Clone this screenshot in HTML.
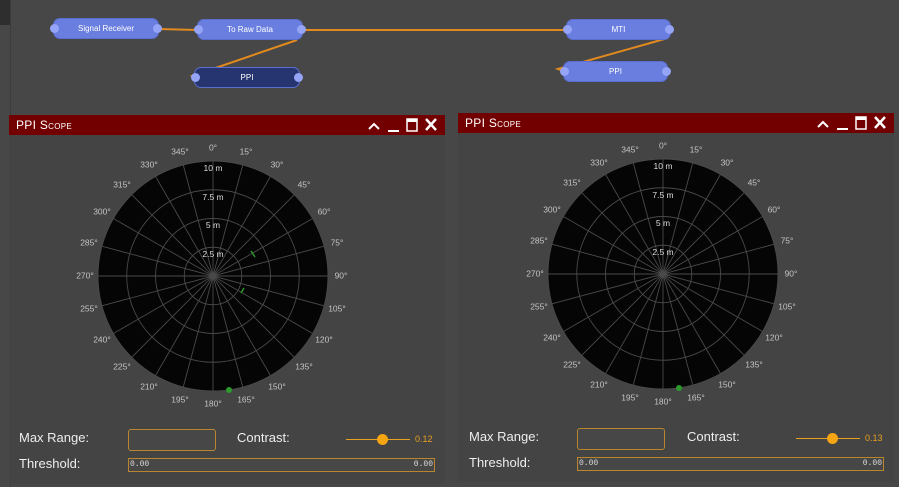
<!DOCTYPE html>
<html><head><style>
body{margin:0;width:899px;height:487px;overflow:hidden;background:#474747;font-family:"Liberation Sans",sans-serif;position:relative}
.a{position:absolute}
.node{position:absolute;height:19px;border-radius:6px;background:#6a7ee0;color:#fff;font-size:8px;text-align:center;line-height:19px;box-shadow:0 0 0 1px #5a6ed0}
.port{position:absolute;width:9px;height:9px;border-radius:50%;background:#95a4f7;top:5px}
.panel{position:absolute;width:436px;height:369px;background:#444}
.tb{height:20px;background:#730000;color:#fff;font-size:12px;line-height:20px;padding-left:7px;font-variant:small-caps;letter-spacing:.3px}
.lbl{position:absolute;color:#eee;font-size:13px}
.box{position:absolute;border:1px solid #b8862e;border-radius:3px;background:#474747}
.mono{position:absolute;font-family:"Liberation Mono",monospace;font-size:8px;color:#ddd;top:1px}
</style></head><body>
<div class="a" style="left:0;top:0;width:10px;height:25px;background:#2e2e2e"></div>
<div class="a" style="left:10px;top:0;width:1px;height:487px;background:#3c3c3c"></div>
<svg class="a" style="left:0;top:0" width="899" height="110">
<g stroke="#e08a1f" stroke-width="2" fill="none">
<line x1="158" y1="29" x2="198" y2="30"/>
<line x1="302" y1="30" x2="567" y2="30"/>
<path d="M297 40 L192 76 L197 79"/>
<path d="M668 38 L558 69 L564 71"/>
</g></svg>
<div class="node" style="left:54px;top:19px;width:104px">Signal Receiver<div class="port" style="left:-4px"></div><div class="port" style="right:-4px"></div></div>
<div class="node" style="left:198px;top:20px;width:104px">To Raw Data<div class="port" style="left:-4px"></div><div class="port" style="right:-4px"></div></div>
<div class="node" style="left:195px;top:68px;width:104px;background:#26346f;box-shadow:0 0 0 1px #5a6ed0">PPI<div class="port" style="left:-4px"></div><div class="port" style="right:-4px"></div></div>
<div class="node" style="left:567px;top:20px;width:103px">MTI<div class="port" style="left:-4px"></div><div class="port" style="right:-4px"></div></div>
<div class="node" style="left:564px;top:62px;width:103px">PPI<div class="port" style="left:-4px"></div><div class="port" style="right:-4px"></div></div>

<div class="panel" style="left:9px;top:115px">
<div class="tb">PPI Scope</div>
<svg class="a" style="left:355px;top:0" width="80" height="20" fill="none" stroke="#fff" stroke-width="2"><path d="M5 14 L10 9 L15 14"/><path d="M24 16 H35"/><rect x="43" y="4" width="10" height="12" stroke-width="1.5"/><path d="M43 5.5 H53" stroke-width="3"/><path d="M62 4 L72 15 M72 4 L62 15" stroke-width="2.5"/></svg>
</div>
<div class="panel" style="left:458px;top:113px">
<div class="tb">PPI Scope</div>
<svg class="a" style="left:355px;top:0" width="80" height="20" fill="none" stroke="#fff" stroke-width="2"><path d="M5 14 L10 9 L15 14"/><path d="M24 16 H35"/><rect x="43" y="4" width="10" height="12" stroke-width="1.5"/><path d="M43 5.5 H53" stroke-width="3"/><path d="M62 4 L72 15 M72 4 L62 15" stroke-width="2.5"/></svg>
</div>

<svg class="a" style="left:0;top:0" width="899" height="487" font-family="Liberation Sans" font-size="8.5">
<defs><g id="grid">
<circle r="115" fill="#050505"/>
<g stroke="#4a4a4a" stroke-width="0.9" fill="none">
<circle r="28.75"/><circle r="57.5"/><circle r="86.25"/><circle r="115"/>
<line y1="-115" y2="115"/><line y1="-115" y2="115" transform="rotate(15)"/><line y1="-115" y2="115" transform="rotate(30)"/><line y1="-115" y2="115" transform="rotate(45)"/><line y1="-115" y2="115" transform="rotate(60)"/><line y1="-115" y2="115" transform="rotate(75)"/><line y1="-115" y2="115" transform="rotate(90)"/><line y1="-115" y2="115" transform="rotate(105)"/><line y1="-115" y2="115" transform="rotate(120)"/><line y1="-115" y2="115" transform="rotate(135)"/><line y1="-115" y2="115" transform="rotate(150)"/><line y1="-115" y2="115" transform="rotate(165)"/>
</g>
<g fill="#ddd" text-anchor="middle">
<text y="-105">10 m</text><text y="-76">7.5 m</text><text y="-48">5 m</text><text y="-19">2.5 m</text>
</g>
<g fill="#c4c4c4" text-anchor="middle" dominant-baseline="middle">
<text x="0" y="-128">0°</text><text x="33" y="-124">15°</text><text x="64" y="-111">30°</text><text x="91" y="-91">45°</text><text x="111" y="-64">60°</text><text x="124" y="-33">75°</text><text x="128" y="0">90°</text><text x="124" y="33">105°</text><text x="111" y="64">120°</text><text x="91" y="91">135°</text><text x="64" y="111">150°</text><text x="33" y="124">165°</text><text x="0" y="128">180°</text>
<text x="-33" y="-124">345°</text><text x="-64" y="-111">330°</text><text x="-91" y="-91">315°</text><text x="-111" y="-64">300°</text><text x="-124" y="-33">285°</text><text x="-128" y="0">270°</text><text x="-124" y="33">255°</text><text x="-111" y="64">240°</text><text x="-91" y="91">225°</text><text x="-64" y="111">210°</text><text x="-33" y="124">195°</text>
</g></g></defs>
<g transform="translate(213,276)"><use href="#grid"/>
<g stroke="#2a9a2a" stroke-width="1.5"><line x1="38" y1="-25" x2="42" y2="-19"/><line x1="28" y1="17" x2="31" y2="12"/></g><circle cx="16" cy="114" r="3" fill="#2a9a2a"/></g>
<g transform="translate(663,274)"><use href="#grid"/><circle cx="16" cy="114" r="3" fill="#2a9a2a"/></g>
</svg>

<div class="lbl" style="left:19px;top:430px">Max Range:</div>
<div class="box" style="left:128px;top:429px;width:86px;height:20px"></div>
<div class="lbl" style="left:237px;top:430px">Contrast:</div>
<div class="a" style="left:346px;top:439px;width:64px;height:1px;background:#e8a020"></div>
<div class="a" style="left:377px;top:434px;width:11px;height:11px;border-radius:50%;background:#f5a412"></div>
<div class="a" style="left:415px;top:434px;color:#e8a020;font-size:9px">0.12</div>
<div class="lbl" style="left:19px;top:456px">Threshold:</div>
<div class="box" style="left:128px;top:458px;width:305px;height:12px;border-radius:0"><span class="mono" style="left:1px">0.00</span><span class="mono" style="right:1px">0.00</span></div>

<div class="lbl" style="left:469px;top:429px">Max Range:</div>
<div class="box" style="left:577px;top:428px;width:86px;height:20px"></div>
<div class="lbl" style="left:687px;top:429px">Contrast:</div>
<div class="a" style="left:796px;top:438px;width:64px;height:1px;background:#e8a020"></div>
<div class="a" style="left:827px;top:433px;width:11px;height:11px;border-radius:50%;background:#f5a412"></div>
<div class="a" style="left:865px;top:433px;color:#e8a020;font-size:9px">0.13</div>
<div class="lbl" style="left:469px;top:455px">Threshold:</div>
<div class="box" style="left:577px;top:457px;width:305px;height:12px;border-radius:0"><span class="mono" style="left:1px">0.00</span><span class="mono" style="right:1px">0.00</span></div>
</body></html>
